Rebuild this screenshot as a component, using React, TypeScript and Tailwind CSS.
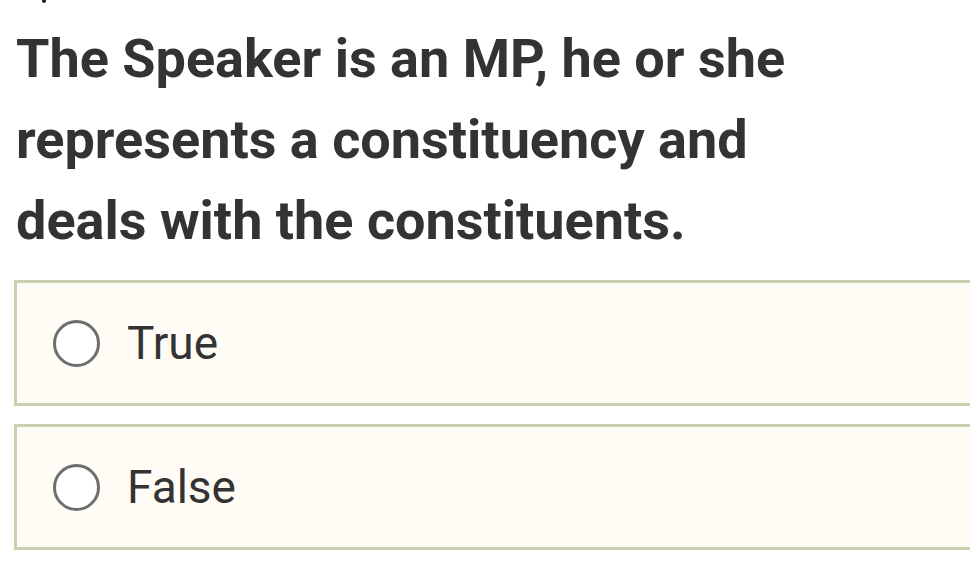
const options = ['True', 'False'];

function RadioOption({ label }: { label: string }) {
  return (
    <label className="-mr-[40px] flex h-[126px] items-center gap-[27px] border-[3px] border-[#c9d0b0] bg-[#fffbf5] pl-[36px]">
      <span className="h-[47px] w-[47px] shrink-0 rounded-full border-[3.5px] border-[#6e6e6e] bg-white" />
      <span className="text-[46px] leading-none text-[#333333]">{label}</span>
    </label>
  );
}

export default function App() {
  return (
    <div
      className="h-[564px] w-[970px] overflow-hidden bg-white"
      style={{ fontFamily: 'Roboto, "Liberation Sans", sans-serif' }}
    >
      <div className="ml-[42px] h-[3px] w-[4px] rounded-b-full bg-[#222]" />
      <div className="pl-[14px] pt-[15px]">
        <h1 className="pl-[2px] text-[54px] font-bold leading-[81px] text-[#333333]">
          The Speaker is an MP, he or she
          <br />
          represents a constituency and
          <br />
          deals with the constituents.
        </h1>
        <div className="mt-[19px] flex flex-col gap-[18px]">
          {options.map((option) => (
            <RadioOption key={option} label={option} />
          ))}
        </div>
      </div>
    </div>
  );
}
